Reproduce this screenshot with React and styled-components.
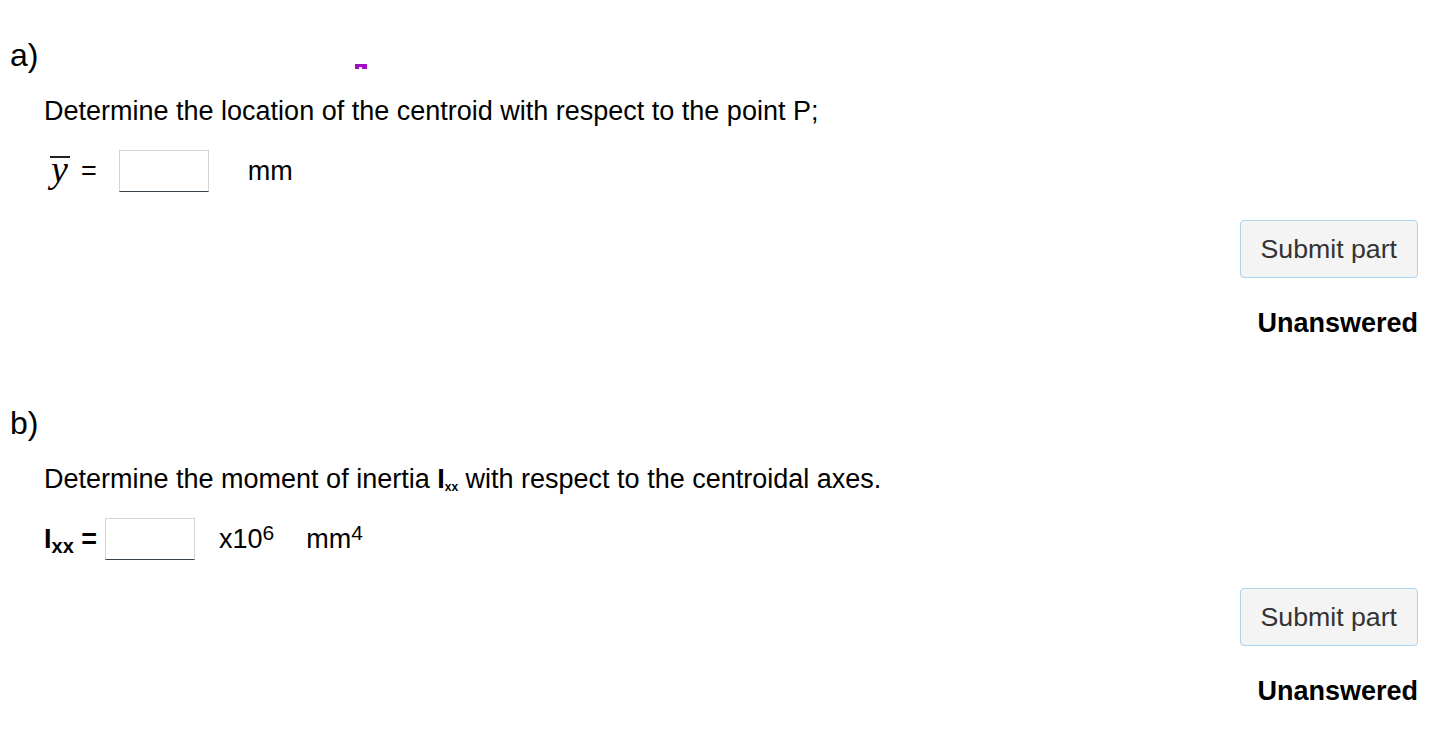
import React from "react";
import styled, { createGlobalStyle } from "styled-components";

const GlobalStyle = createGlobalStyle`
    html, body {
        margin: 0;
        padding: 0;
        background: #fff;
    }
    body {
        font-family: "Liberation Sans", Arial, sans-serif;
        color: #000;
    }
`;

const Page = styled.div`
    display: flex;
    flex-direction: column;
    gap: 64px;
    padding: 35px 14px 0 10px;
`;

const Part = styled.section`
    position: relative;
    display: flex;
    flex-direction: column;
`;

const PartLabel = styled.div`
    font-size: 32px;
    line-height: 40px;
    margin-bottom: 20px;
`;

const Mark = styled.svg`
    position: absolute;
    left: 345px;
    top: 29px;
`;

const Body = styled.div`
    padding-left: 34px;
    display: flex;
    flex-direction: column;
`;

const Prompt = styled.p`
    margin: 0 0 23px;
    font-size: 27px;
    line-height: 32px;
`;

const Strong = styled.b`
    font-weight: bold;
`;

const Sub = styled.sub`
    font-size: ${p => p.size || 12}px;
    font-weight: bold;
    vertical-align: ${p => p.drop || -3}px;
    line-height: 0;
`;

const Sup = styled.sup`
    font-size: 21px;
    vertical-align: 8px;
    line-height: 0;
`;

const AnswerRow = styled.div`
    display: flex;
    align-items: center;
    height: 42px;
    font-size: 27px;
    line-height: 32px;
`;

const YBar = styled.span`
    display: inline-block;
    margin: 0 0 7px 6px;
    padding: 0 2px 0 1px;
    width: 17px;
    font-family: "Liberation Serif", "Times New Roman", serif;
    font-style: italic;
    font-size: 38px;
    line-height: 22px;
    border-top: 2px solid #222;
`;

const Symbol = styled.span`
    font-weight: ${p => (p.bold ? "bold" : "normal")};
    margin-left: ${p => p.left || 0}px;
    margin-right: ${p => p.right || 0}px;
`;

const AnswerInput = styled.input`
    box-sizing: border-box;
    width: 90px;
    height: 42px;
    margin: 0 0 0 ${p => p.left || 0}px;
    border: 1px solid #d4d4d4;
    border-bottom: 1px solid #37434d;
    background: #fff;
    font-size: 20px;
    outline: none;
`;

const Unit = styled.span`
    margin-left: ${p => p.left}px;
    white-space: nowrap;
`;

const Actions = styled.div`
    display: flex;
    flex-direction: column;
    align-items: flex-end;
    gap: 29px;
    margin-top: 28px;
`;

const SubmitButton = styled.button`
    height: 58px;
    padding: 0 20px;
    border: 1px solid #a9d5f2;
    border-radius: 4px;
    background: #f4f4f4;
    color: #333;
    font-family: "Liberation Sans", Arial, sans-serif;
    font-size: 26.7px;
    cursor: pointer;
`;

const Status = styled.div`
    font-size: 27px;
    line-height: 32px;
    font-weight: bold;
`;

const parts = [
    {
        id: "a",
        mark: true,
        prompt: <>Determine the location of the centroid with respect to the point P;</>,
        row: (
            <>
                <YBar>y</YBar>
                <Symbol left={11} right={22}>=</Symbol>
                <AnswerInput aria-label="y bar" />
                <Unit left={39}>mm</Unit>
            </>
        )
    },
    {
        id: "b",
        prompt: (
            <>
                Determine the moment of inertia <Strong>I</Strong>
                <Sub>xx</Sub> with respect to the centroidal axes.
            </>
        ),
        row: (
            <>
                <Symbol bold>
                    I<Sub size={20} drop={-5}>xx</Sub> =
                </Symbol>
                <AnswerInput aria-label="Ixx" left={8} />
                <Unit left={24}>
                    x10<Sup>6</Sup>
                </Unit>
                <Unit left={32}>
                    mm<Sup>4</Sup>
                </Unit>
            </>
        )
    }
];

export default function App() {
    return (
        <>
            <GlobalStyle />
            <Page>
                {parts.map(part => (
                    <Part key={part.id}>
                        <PartLabel>{part.id})</PartLabel>
                        {part.mark && (
                            <Mark width="12" height="5" viewBox="0 0 12 5">
                                <path d="M0 0H12V5H7V3H4V5H0Z" fill="#a10fc0" />
                            </Mark>
                        )}
                        <Body>
                            <Prompt>{part.prompt}</Prompt>
                            <AnswerRow>{part.row}</AnswerRow>
                            <Actions>
                                <SubmitButton type="button">Submit part</SubmitButton>
                                <Status>Unanswered</Status>
                            </Actions>
                        </Body>
                    </Part>
                ))}
            </Page>
        </>
    );
}
